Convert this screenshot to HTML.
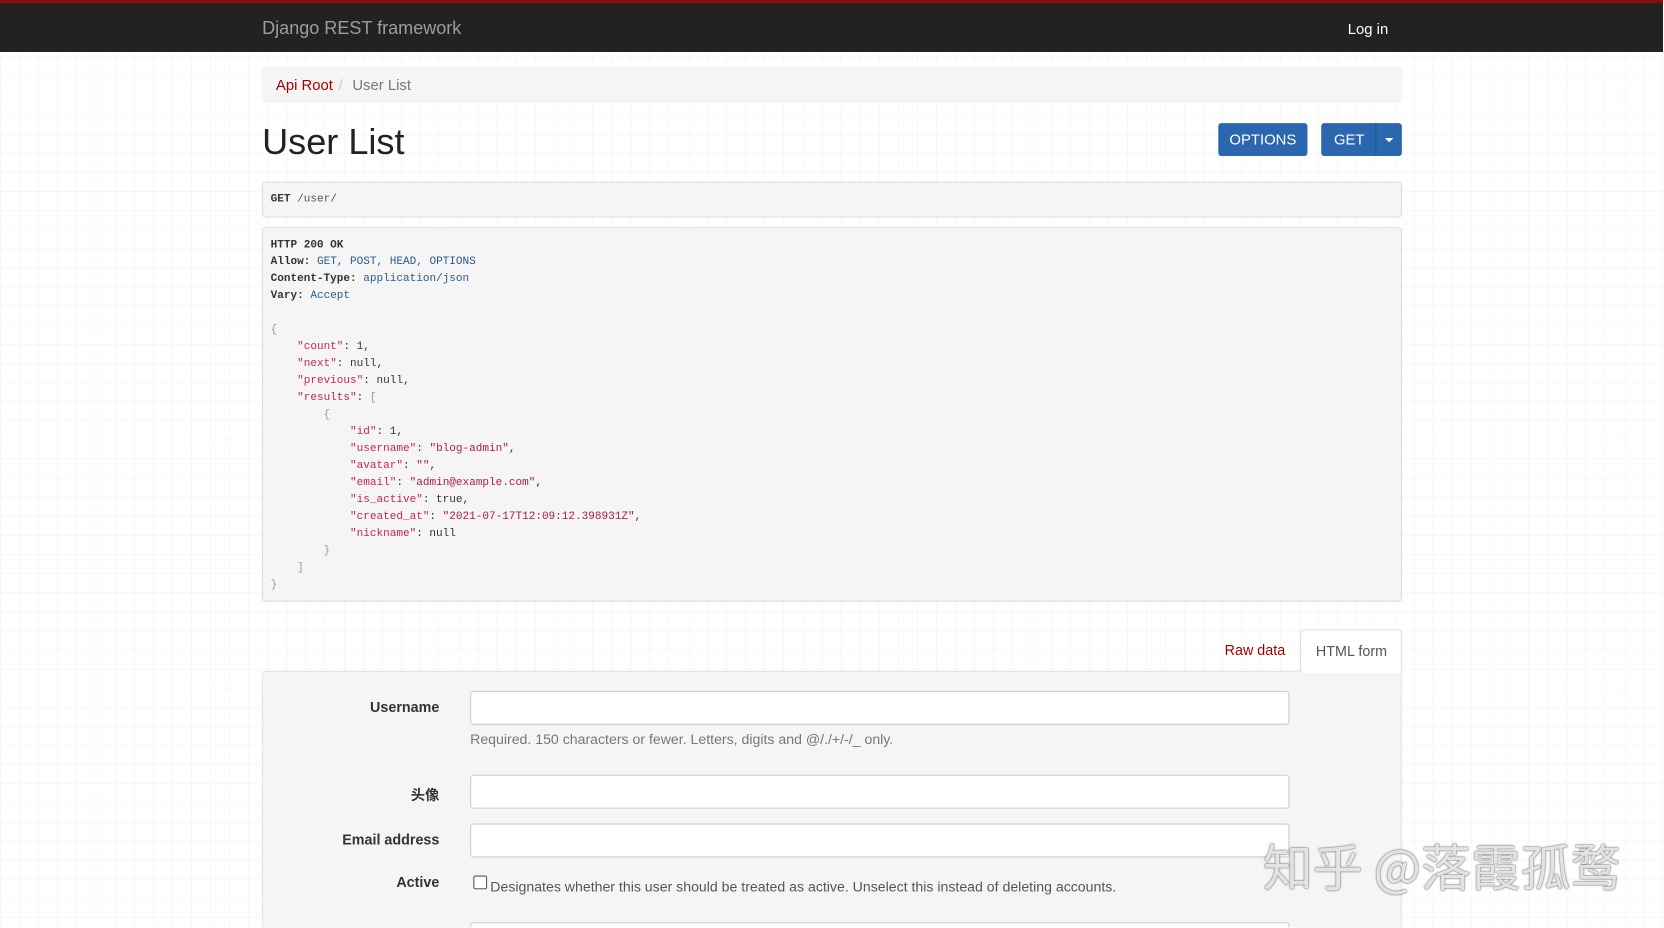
<!DOCTYPE html>
<html><head><meta charset="utf-8"><style>
html,body{margin:0;padding:0;width:1664px;height:928px;overflow:hidden;background:#fff}
#w{position:absolute;left:0;top:0;width:1567px;height:874px;overflow:hidden;transform:scale(1.06123);transform-origin:0 0;font-family:"Liberation Sans","Noto Sans CJK SC",sans-serif;color:#333;
background-color:#fff;background-image:linear-gradient(rgba(0,0,0,.03) 1px,transparent 1px),linear-gradient(90deg,rgba(0,0,0,.03) 1px,transparent 1px);background-size:18px 18px}
.nav{position:absolute;left:0;top:0;width:1568px;height:46px;background:#222;border-top:3px solid #8b0d0d}
.brand{position:absolute;left:247px;top:14px;font-size:17px;color:#9d9d9d}
.login{position:absolute;left:1270px;top:16px;font-size:14px;color:#fff}
.abs{position:absolute}
.bc{left:247px;top:63px;width:1074px;height:34px;background:#f5f5f5;border-radius:3px;font-size:14px}
.btn{background:#2a67ae;color:#fff;font-size:14px;border-radius:3px;height:31px;line-height:31px;text-align:center}
pre{margin:0;font-family:"Liberation Mono",monospace;font-size:10.4px;line-height:16px;color:#333}
.box{background:#f5f5f5;border:1px solid #ddd;border-radius:3px}
.k{color:#c7254e}.s{color:#b01c3c}.b{color:#2a5a8a}.g{color:#999}
.lbl{position:absolute;right:1153px;font-size:13.5px;font-weight:bold;color:#333;text-align:right}
.inp{position:absolute;left:443px;width:770px;height:30px;background:#fff;border:1px solid #ccc;border-radius:3px}
.help{position:absolute;left:443px;font-size:13.3px;color:#777}
</style></head><body><div id="w">
<div class="nav"><div class="brand">Django REST framework</div><div class="login">Log in</div></div>
<div class="abs bc"><span class="abs" style="left:13px;top:9px;color:#a30000">Api Root</span><span class="abs" style="left:72px;top:9px;color:#ccc">/</span><span class="abs" style="left:85px;top:9px;color:#777">User List</span></div>
<div class="abs" style="left:247px;top:115px;font-size:34px;color:#222">User List</div>
<div class="abs btn" style="left:1148px;top:116px;width:84px">OPTIONS</div>
<div class="abs btn" style="left:1245px;top:116px;width:76px"><span class="abs" style="left:12px">GET</span><span class="abs" style="left:51px;top:0;height:31px;border-left:1px solid #1f5694"></span><span class="abs" style="left:60px;top:14px;border-left:4px solid transparent;border-right:4px solid transparent;border-top:4px solid #fff"></span></div>
<div class="abs box" style="left:247px;top:171px;width:1072px;height:32px"><pre style="position:absolute;left:7px;top:8px"><b>GET</b> <span class="b" style="color:#555">/user/</span></pre></div>
<div class="abs box" style="left:247px;top:214px;width:1072px;height:351px"><pre style="position:absolute;left:7px;top:8px"><b>HTTP 200 OK</b>
<b>Allow:</b> <span class="b">GET, POST, HEAD, OPTIONS</span>
<b>Content-Type:</b> <span class="b">application/json</span>
<b>Vary:</b> <span class="b">Accept</span>

<span class="g">{</span>
    <span class="k">"count"</span>: 1,
    <span class="k">"next"</span>: null,
    <span class="k">"previous"</span>: null,
    <span class="k">"results"</span>: <span class="g">[</span>
        <span class="g">{</span>
            <span class="k">"id"</span>: 1,
            <span class="k">"username"</span>: <span class="s">"blog-admin"</span>,
            <span class="k">"avatar"</span>: <span class="s">""</span>,
            <span class="k">"email"</span>: <span class="s">"admin@example.com"</span>,
            <span class="k">"is_active"</span>: true,
            <span class="k">"created_at"</span>: <span class="s">"2021-07-17T12:09:12.398931Z"</span>,
            <span class="k">"nickname"</span>: null
        <span class="g">}</span>
    <span class="g">]</span>
<span class="g">}</span></pre></div>
<div class="abs" style="left:1154px;top:605px;font-size:13.5px;color:#a30000">Raw data</div>
<div class="abs" style="left:1225px;top:593px;width:94px;height:40px;background:#fff;border:1px solid #ddd;border-bottom:none;border-radius:3px 3px 0 0;z-index:2"><span class="abs" style="left:14px;top:12px;font-size:13.5px;color:#555">HTML form</span></div>
<div class="abs" style="left:247px;top:632px;width:1072px;height:320px;background:#f5f5f5;border:1px solid #e0e0e0;border-radius:3px"></div>
<div class="lbl" style="top:659px">Username</div>
<div class="inp" style="top:651px"></div>
<div class="help" style="top:689px">Required. 150 characters or fewer. Letters, digits and @/./+/-/_ only.</div>
<div class="lbl" style="top:738px">头像</div>
<div class="inp" style="top:730px"></div>
<div class="lbl" style="top:784px">Email address</div>
<div class="inp" style="top:776px"></div>
<div class="lbl" style="top:824px">Active</div>
<div class="abs" style="left:446px;top:825px;width:11px;height:11px;border:1px solid #555;border-radius:2px;background:#fff"></div>
<div class="help" style="left:462px;top:828px;color:#555">Designates whether this user should be treated as active. Unselect this instead of deleting accounts.</div>
<div class="inp" style="top:869px"></div>
<div class="abs" style="left:1190px;top:780px;font-size:47px;color:rgba(240,240,240,.9);text-shadow:0 0 2px #777,0 0 1px #555;font-family:'Noto Sans CJK SC',sans-serif;white-space:nowrap">知乎 @落霞孤鹜</div>
</div></body></html>
